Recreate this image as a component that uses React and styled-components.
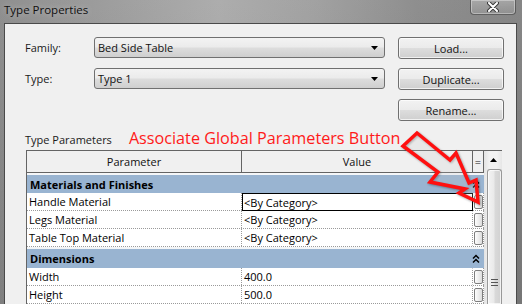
import React from 'react';
import styled, { createGlobalStyle } from 'styled-components';

const GlobalStyle = createGlobalStyle`
  html, body {
    margin: 0;
    padding: 0;
  }
  body {
    width: 522px;
    height: 304px;
    overflow: hidden;
    font-family: "Open Sans", "Noto Sans", sans-serif;
    font-size: 11px;
    color: #000;
  }
`;

const rows = [
  { type: 'group', name: 'Materials and Finishes' },
  { type: 'param', name: 'Handle Material', value: '<By Category>', focused: true },
  { type: 'param', name: 'Legs Material', value: '<By Category>' },
  { type: 'param', name: 'Table Top Material', value: '<By Category>' },
  { type: 'group', name: 'Dimensions' },
  { type: 'param', name: 'Width', value: '400.0' },
  { type: 'param', name: 'Height', value: '500.0' },
];

const Window = styled.div`
  position: relative;
  width: 522px;
  height: 304px;
  display: flex;
  flex-direction: column;
  overflow: hidden;
  background:
    linear-gradient(180deg, rgba(255, 255, 255, 0.08), rgba(0, 0, 0, 0.05)),
    linear-gradient(90deg, #868686 0%, #959595 20%, #a6a6a6 42%, #9a9a9a 60%, #858585 80%, #7c7c7c 100%);
`;

const TitleBar = styled.div`
  height: 23px;
  flex: none;
  display: flex;
  justify-content: space-between;
  align-items: flex-start;
  padding-left: 4px;
  padding-right: 6px;
`;

const Title = styled.div`
  font-size: 11.5px;
  line-height: 20px;
  color: #101010;
  text-shadow: 0 0 6px rgba(255, 255, 255, 0.45);
`;

const CloseButton = styled.div`
  width: 44px;
  height: 14px;
  border: 1px solid rgba(40, 40, 40, 0.55);
  border-top: none;
  border-radius: 0 0 4px 4px;
  background: linear-gradient(180deg, rgba(255, 255, 255, 0.25), rgba(255, 255, 255, 0.08));
  box-shadow: inset 0 0 0 1px rgba(255, 255, 255, 0.35);
  display: flex;
  align-items: center;
  justify-content: center;
`;

const Body = styled.div`
  flex: 1;
  margin: 0 5px 0 4px;
  border: 1px solid #4a4a4a;
  border-bottom: none;
  background: #f0f0f0;
  padding: 13px 14px 0 20px;
  display: flex;
  flex-direction: column;
  min-height: 0;
`;

const TopGrid = styled.div`
  display: grid;
  grid-template-columns: 69px 291px 106px;
  grid-auto-rows: 22px;
  column-gap: 0;
  row-gap: 9px;
  & > :nth-child(3n) {
    margin-left: 13px;
  }
`;

const Label = styled.div`
  display: flex;
  align-items: center;
  height: 21px;
  color: #1a1a1a;
`;

const Combo = styled.div`
  height: 21px;
  box-sizing: border-box;
  border: 1px solid #707070;
  border-radius: 3px;
  background: linear-gradient(180deg, #f3f3f3 0%, #ebebeb 48%, #dddddd 52%, #cfcfcf 100%);
  display: flex;
  align-items: center;
  justify-content: space-between;
  padding: 0 6px 0 3px;
  color: #111;
`;

const Button = styled.div`
  width: 106px;
  height: 22px;
  box-sizing: border-box;
  border: 1px solid #707070;
  border-radius: 3px;
  background: linear-gradient(180deg, #f2f2f2 0%, #ebebeb 48%, #dddddd 52%, #cfcfcf 100%);
  box-shadow: inset 0 0 0 1px rgba(255, 255, 255, 0.7);
  display: flex;
  align-items: center;
  justify-content: center;
  color: #111;
`;

const ParamsBar = styled.div`
  height: 29px;
  flex: none;
  display: flex;
  align-items: baseline;
  padding-top: 6px;
  box-sizing: border-box;
  gap: 17px;
`;

const SectionLabel = styled.div`
  color: #1a1a1a;
`;

const Annotation = styled.div`
  font-size: 16.2px;
  color: #ff1a1a;
`;

const TableWrap = styled.div`
  flex: 1;
  margin-left: 1px;
  display: flex;
  border-left: 1px solid #646464;
  border-top: 1px solid #646464;
  background: #fff;
  min-height: 0;
`;

const Grid = styled.div`
  width: 457px;
  display: flex;
  flex-direction: column;
`;

const cols = '215px 231px 11px';

const HeaderRow = styled.div`
  display: grid;
  grid-template-columns: ${cols};
  height: 22px;
  box-sizing: border-box;
  border-bottom: 1px solid #646464;
  background: #f0f0f0;
`;

const HeaderCell = styled.div`
  display: flex;
  align-items: center;
  justify-content: center;
  border-right: 1px solid #646464;
  color: #111;
`;

const GroupRow = styled.div`
  height: 21px;
  box-sizing: border-box;
  border-top: 2px solid #f4f6f8;
  background: #99b4d1;
  display: flex;
  align-items: center;
  justify-content: space-between;
  padding: 0 3px 0 3px;
  font-weight: 700;
`;

const DataRow = styled.div`
  display: grid;
  grid-template-columns: ${cols};
  height: 18px;
  box-sizing: border-box;
  border-bottom: 1px dotted #9a9a9a;
`;

const NameCell = styled.div`
  display: flex;
  align-items: center;
  padding-left: 2px;
  border-right: 1px dotted #9a9a9a;
  white-space: nowrap;
`;

const ValueCell = styled.div`
  display: flex;
  align-items: center;
  padding-left: 1px;
  box-sizing: border-box;
  border: 1px solid ${(p) => (p.$focused ? '#000' : 'transparent')};
  border-right: 1px ${(p) => (p.$focused ? 'solid #000' : 'dotted #9a9a9a')};
  margin: ${(p) => (p.$focused ? '0 0 -1px 0' : '0')};
  border-left-color: ${(p) => (p.$focused ? '#000' : 'transparent')};
  white-space: nowrap;
`;

const EqCell = styled.div`
  display: flex;
  align-items: center;
  justify-content: center;
  border-right: 1px dotted #9a9a9a;
`;

const MiniButton = styled.div`
  width: 9px;
  height: 14px;
  box-sizing: border-box;
  border: 1px solid #7d7d7d;
  border-radius: 2px;
  background: linear-gradient(90deg, #fdfdfd, #dedede);
`;

const ScrollBar = styled.div`
  width: 18px;
  flex: none;
  box-sizing: border-box;
  background: linear-gradient(90deg, #e3e3e3, #f2f2f2 30%, #f2f2f2 70%, #e6e6e6);
  display: flex;
  flex-direction: column;
  align-items: center;
`;

const ArrowBtn = styled.div`
  height: 18px;
  width: 100%;
  display: flex;
  align-items: center;
  justify-content: center;
`;

const Thumb = styled.div`
  flex: 1;
  width: 15px;
  margin-left: 2px;
  box-sizing: border-box;
  border: 1px solid #989898;
  border-bottom: none;
  border-radius: 3px 3px 0 0;
  background: linear-gradient(90deg, #f3f3f3 0%, #eaeaea 45%, #d9d9d9 55%, #d1d1d1 100%);
  box-shadow: inset 0 0 0 1px rgba(255, 255, 255, 0.7);
  display: flex;
  flex-direction: column;
  align-items: center;
  padding-top: 109px;
`;

const Grip = styled.div`
  width: 7px;
  height: 1px;
  margin-bottom: 2px;
  background: #555;
`;

const Overlay = styled.svg`
  position: absolute;
  left: 0;
  top: 0;
  pointer-events: none;
  filter: drop-shadow(1px 1px 1px rgba(0, 0, 0, 0.35));
`;

const Caret = () => (
  <svg width="7" height="4" viewBox="0 0 7 4">
    <path d="M0 4 L3.5 0 L7 4 Z" fill="#000" />
  </svg>
);

const Chevrons = () => (
  <svg width="8" height="10" viewBox="0 0 8 10" style={{ marginRight: 1 }}>
    <path d="M1 4.5 L4 1.5 L7 4.5 M1 8.5 L4 5.5 L7 8.5" stroke="#000" strokeWidth="1.5" fill="none" />
  </svg>
);

const DropTriangle = () => (
  <svg width="7" height="4" viewBox="0 0 7 4">
    <path d="M0 0 L7 0 L3.5 4 Z" fill="#000" />
  </svg>
);

export default function App() {
  return (
    <>
      <GlobalStyle />
      <Window>
        <TitleBar>
          <Title>Type Properties</Title>
          <CloseButton>
            <svg width="12" height="10" viewBox="0 0 12 10">
              <path d="M2 1 L10 9 M10 1 L2 9" stroke="#3a3a3a" strokeWidth="4" strokeLinecap="round" />
              <path d="M2 1 L10 9 M10 1 L2 9" stroke="#fff" strokeWidth="2" strokeLinecap="round" />
            </svg>
          </CloseButton>
        </TitleBar>
        <Body>
          <TopGrid>
            <Label>Family:</Label>
            <Combo>
              <span>Bed Side Table</span>
              <DropTriangle />
            </Combo>
            <Button>Load...</Button>
            <Label>Type:</Label>
            <Combo>
              <span>Type 1</span>
              <DropTriangle />
            </Combo>
            <Button>Duplicate...</Button>
            <div />
            <div />
            <Button>Rename...</Button>
          </TopGrid>
          <ParamsBar>
            <SectionLabel>Type Parameters</SectionLabel>
            <Annotation>Associate Global Parameters Button</Annotation>
          </ParamsBar>
          <TableWrap>
            <Grid>
              <HeaderRow>
                <HeaderCell>Parameter</HeaderCell>
                <HeaderCell>Value</HeaderCell>
                <HeaderCell>=</HeaderCell>
              </HeaderRow>
              {rows.map((r) =>
                r.type === 'group' ? (
                  <GroupRow key={r.name}>
                    <span>{r.name}</span>
                    <Chevrons />
                  </GroupRow>
                ) : (
                  <DataRow key={r.name}>
                    <NameCell>{r.name}</NameCell>
                    <ValueCell $focused={r.focused}>{r.value}</ValueCell>
                    <EqCell>
                      <MiniButton />
                    </EqCell>
                  </DataRow>
                )
              )}
            </Grid>
            <ScrollBar>
              <ArrowBtn>
                <Caret />
              </ArrowBtn>
              <Thumb>
                <Grip />
                <Grip />
                <Grip />
              </Thumb>
            </ScrollBar>
          </TableWrap>
        </Body>
        <Overlay width="522" height="304" viewBox="0 0 522 304">
          <polygon
            points="417,133 450,160 456,153 469,183 476,180 478,202 459,193 465,189 430,182 438,172 403,146"
            fill="rgba(255,255,255,0.15)"
            stroke="#ff1010"
            strokeWidth="3.5"
            strokeLinejoin="miter"
          />
        </Overlay>
      </Window>
    </>
  );
}
